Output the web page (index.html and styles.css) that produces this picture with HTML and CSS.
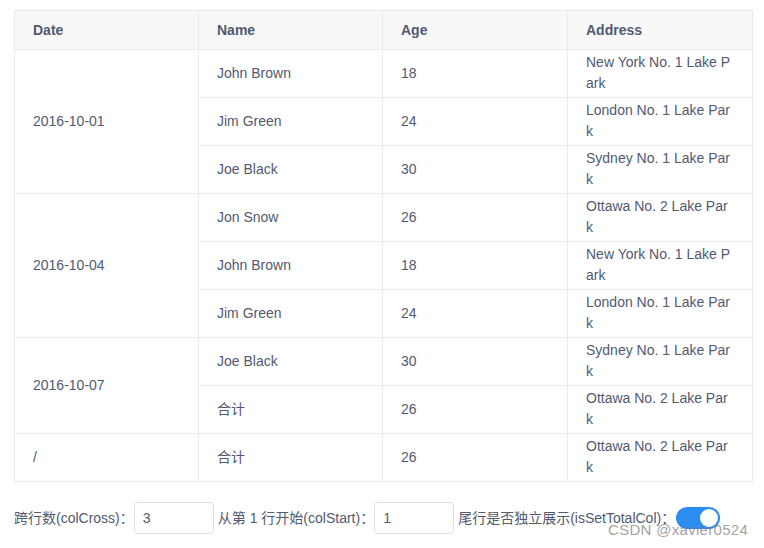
FILE: index.html
```html
<!DOCTYPE html>
<html>
<head>
<meta charset="utf-8">
<link rel="stylesheet" href="styles.css">
</head>
<body>
<div class="page">
  <table class="grid">
    <colgroup>
      <col class="c1"><col class="c2"><col class="c3"><col class="c4">
    </colgroup>
    <thead>
      <tr><th>Date</th><th>Name</th><th>Age</th><th>Address</th></tr>
    </thead>
    <tbody>
      <tr><td rowspan="3">2016-10-01</td><td>John Brown</td><td>18</td><td class="addr">New York No. 1 Lake Park</td></tr>
      <tr><td>Jim Green</td><td>24</td><td class="addr">London No. 1 Lake Park</td></tr>
      <tr><td>Joe Black</td><td>30</td><td class="addr">Sydney No. 1 Lake Park</td></tr>
      <tr><td rowspan="3">2016-10-04</td><td>Jon Snow</td><td>26</td><td class="addr">Ottawa No. 2 Lake Park</td></tr>
      <tr><td>John Brown</td><td>18</td><td class="addr">New York No. 1 Lake Park</td></tr>
      <tr><td>Jim Green</td><td>24</td><td class="addr">London No. 1 Lake Park</td></tr>
      <tr><td rowspan="2">2016-10-07</td><td>Joe Black</td><td>30</td><td class="addr">Sydney No. 1 Lake Park</td></tr>
      <tr><td>合计</td><td>26</td><td class="addr">Ottawa No. 2 Lake Park</td></tr>
      <tr><td>/</td><td>合计</td><td>26</td><td class="addr">Ottawa No. 2 Lake Park</td></tr>
    </tbody>
  </table>
  <div class="controls">
    <span class="label">跨行数(colCross)：</span>
    <span class="input">3</span>
    <span class="label">从第 1 行开始(colStart)：</span>
    <span class="input">1</span>
    <span class="label">尾行是否独立展示(isSetTotalCol)：</span>
    <span class="switch"><span class="knob"></span></span>
  </div>
  <div class="watermark">CSDN @xavier0524</div>
</div>
</body>
</html>
```
FILE: styles.css
```css
html, body {
  margin: 0;
  padding: 0;
  background: #ffffff;
}
body {
  font-family: "Liberation Sans", Arial, "Noto Sans CJK SC", sans-serif;
  font-size: 14px;
  color: #515a6e;
}
.page {
  position: relative;
  width: 764px;
  height: 548px;
  padding: 10px 0 0 14px;
  box-sizing: border-box;
}
.grid {
  table-layout: fixed;
  border-collapse: separate;
  border-spacing: 0;
  width: 739px;
  border-left: 1px solid #e8eaec;
  border-top: 1px solid #e8eaec;
}
.c1 { width: 184px; }
.c2 { width: 184px; }
.c3 { width: 185px; }
.c4 { width: 185px; }
.grid th, .grid td {
  border-right: 1px solid #e8eaec;
  border-bottom: 1px solid #e8eaec;
  padding: 0 18px;
  text-align: left;
  vertical-align: middle;
  line-height: 21px;
  box-sizing: border-box;
}
.grid th {
  height: 39px;
  background: #f8f8f9;
  font-weight: bold;
  color: #515a6e;
}
.grid td {
  height: 48px;
  color: #515a6e;
}
.grid td.addr {
  word-break: break-all;
  padding-right: 19px;
  padding-bottom: 2px;
}
.controls {
  display: flex;
  align-items: center;
  margin-top: 20px;
  height: 32px;
  white-space: nowrap;
}
.label {
  line-height: 32px;
}
.input {
  box-sizing: border-box;
  width: 80px;
  height: 32px;
  border: 1px solid #dcdee2;
  border-radius: 4px;
  padding: 0 8px;
  line-height: 30px;
  color: #515a6e;
  margin: 0 4px 0 0;
}
.switch {
  position: relative;
  display: inline-block;
  width: 44px;
  height: 22px;
  border-radius: 11px;
  background: #2d8cf0;
  margin-left: 1px;
}
.knob {
  position: absolute;
  top: 2px;
  right: 2px;
  width: 18px;
  height: 18px;
  border-radius: 50%;
  background: #ffffff;
}
.watermark {
  position: absolute;
  left: 608px;
  top: 520px;
  font-size: 15px;
  line-height: 20px;
  color: rgba(120, 120, 120, 0.7);
  letter-spacing: 0.3px;
}
```
